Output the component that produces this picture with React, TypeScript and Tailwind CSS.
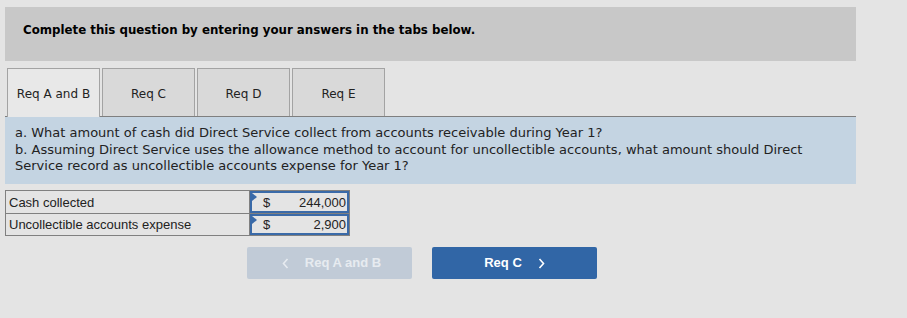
import React from 'react';

const tabs = ['Req A and B', 'Req C', 'Req D', 'Req E'];

const rows = [
    { label: 'Cash collected', value: '244,000' },
    { label: 'Uncollectible accounts expense', value: '2,900' },
];

const Chevron: React.FC<{ dir: 'left' | 'right'; className?: string }> = ({ dir, className }) => (
    <svg width="7" height="11" viewBox="0 0 7 11" className={className} fill="none">
        <polyline
            points={dir === 'left' ? '5.5,1 1.5,5.5 5.5,10' : '1.5,1 5.5,5.5 1.5,10'}
            stroke="currentColor"
            strokeWidth="1.6"
        />
    </svg>
);

const App: React.FC = () => {
    return (
        <div className="w-[907px] h-[318px] bg-[#e4e4e4] pt-[7px] px-[5px] font-['DejaVu_Sans',sans-serif]">
            <div className="w-[851px] h-[54px] bg-[#c8c8c8] pl-[18px] pt-[15px]">
                <h1 className="text-[11.8px] font-bold text-black leading-[16px]">
                    Complete this question by entering your answers in the tabs below.
                </h1>
            </div>

            <div className="w-[851px] mt-[7px] h-[49px] flex items-start border-b border-[#7f7f7f]">
                <div className="flex gap-[2px] pl-[2px]">
                    {tabs.map((t, i) => (
                        <div
                            key={t}
                            className={`w-[93px] flex items-center justify-center pt-[2px] text-[12px] text-[#222] border-t border-l border-r border-[#a3a3a3] ${
                                i === 0 ? 'h-[49px] bg-[#e8e8e8] relative z-10' : 'h-[48px] bg-[#d9d9d9]'
                            }`}
                        >
                            {t}
                        </div>
                    ))}
                </div>
            </div>

            <div className="w-[851px] h-[67px] bg-[#c4d4e2] px-[10px] pt-[8px] text-[13px] leading-[16.5px] text-[#222]">
                <p>a. What amount of cash did Direct Service collect from accounts receivable during Year 1?</p>
                <p>
                    b. Assuming Direct Service uses the allowance method to account for uncollectible accounts, what amount should Direct
                    Service record as uncollectible accounts expense for Year 1?
                </p>
            </div>

            <div className="mt-[6px] w-[345px] border border-[#808080] font-['Liberation_Sans',Arial,sans-serif] text-[13px] text-[#222]">
                {rows.map((r, i) => (
                    <div key={r.label} className={`flex h-[22px] ${i > 0 ? 'border-t border-[#808080]' : ''}`}>
                        <div className="w-[244px] flex items-center pl-[3px] pt-[1px] border-r border-[#808080]">{r.label}</div>
                        <div className="relative flex-1 flex items-center pt-[1px] border-2 border-[#3a6aa8] pl-[11px] pr-[1px]">
                            <span className="absolute left-0 top-0 w-0 h-0 border-t-[4px] border-b-[4px] border-l-[5px] border-t-transparent border-b-transparent border-l-[#3a6aa8]" />
                            <span>$</span>
                            <span className="ml-auto">{r.value}</span>
                        </div>
                    </div>
                ))}
            </div>

            <div className="flex gap-[20px] mt-[11px] ml-[242px] font-['Liberation_Sans',Arial,sans-serif] text-[13px] font-bold">
                <button className="w-[165px] h-[32px] rounded-[2px] bg-[#c1cbd7] text-[#e7ebf0] flex items-center justify-center gap-[16px] pl-[4px]">
                    <Chevron dir="left" />
                    <span>Req A and B</span>
                </button>
                <button className="w-[165px] h-[32px] rounded-[2px] bg-[#3166a6] text-white flex items-center justify-center gap-[16px]">
                    <span>Req C</span>
                    <Chevron dir="right" />
                </button>
            </div>
        </div>
    );
};

export default App;
